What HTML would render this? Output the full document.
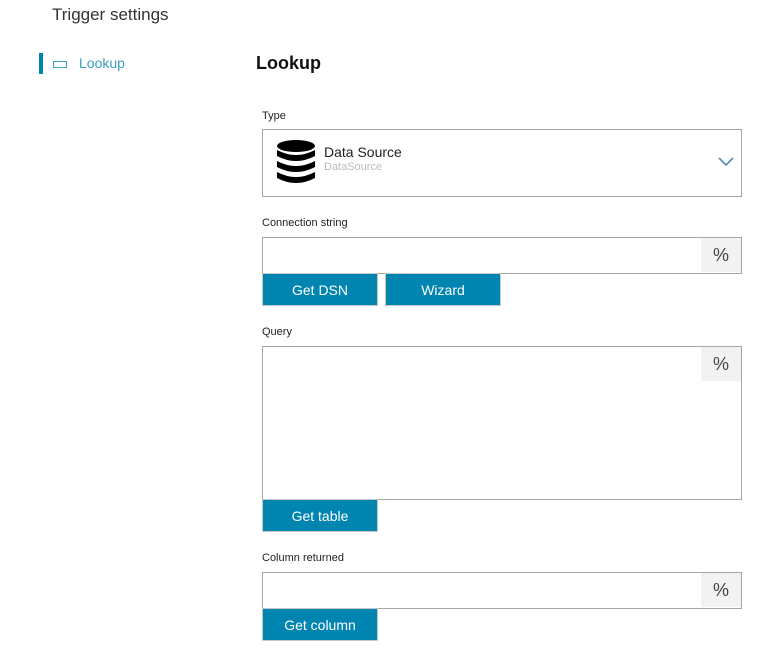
<!DOCTYPE html>
<html><head><style>
body{margin:0;width:768px;height:662px;background:#fff;font-family:"Liberation Sans",sans-serif;position:relative;overflow:hidden}
.a{position:absolute}
.lbl{font-size:11px;color:#222}
.box{border:1px solid #a6a6a6;box-sizing:border-box;background:#fff}
.pct{position:absolute;right:0;top:0;width:40px;height:34px;background:#f2f2f2;color:#444;font-size:18px;text-align:center;line-height:34px}
.btn{background:#0085b0;color:#fff;font-size:14px;text-align:center;line-height:32px;box-sizing:border-box;border:1px solid #c8c8c8}
</style></head><body>
<div class="a" style="left:52px;top:5px;font-size:17px;color:#333">Trigger settings</div>
<div class="a" style="left:39px;top:53px;width:4px;height:21px;background:#0085b0"></div>
<div class="a" style="left:53px;top:61px;width:12px;height:5px;border:1px solid #3a9ec2"></div>
<div class="a" style="left:79px;top:55px;font-size:14px;color:#3a9ec2">Lookup</div>
<div class="a" style="left:256px;top:53px;font-size:18px;font-weight:bold;color:#111">Lookup</div>
<div class="a lbl" style="left:262px;top:110px">Type</div>
<div class="a box" style="left:262px;top:129px;width:480px;height:68px">
<svg class="a" style="left:13px;top:10px" width="40" height="46" viewBox="0 0 40 46"><ellipse cx="20" cy="6" rx="19" ry="6"/><path d="M1 10q19 10 38 0v6q-19 10-38 0z"/><path d="M1 21q19 10 38 0v6q-19 10-38 0z"/><path d="M1 32q19 10 38 0v6q-19 10-38 0z"/></svg>
<div class="a" style="left:61px;top:14px;font-size:14px;color:#222">Data Source</div>
<div class="a" style="left:61px;top:31px;font-size:11px;color:#bbb">DataSource</div>
<svg class="a" style="left:455px;top:27px" width="16" height="10"><path d="M1 1l7 7 7-7" fill="none" stroke="#3a7fa8" stroke-width="1.5"/></svg>
</div>
<div class="a lbl" style="left:262px;top:217px">Connection string</div>
<div class="a box" style="left:262px;top:237px;width:480px;height:37px"><div class="pct">%</div></div>
<div class="a btn" style="left:262px;top:273px;width:116px;height:33px">Get DSN</div>
<div class="a btn" style="left:385px;top:273px;width:116px;height:33px">Wizard</div>
<div class="a lbl" style="left:262px;top:326px">Query</div>
<div class="a box" style="left:262px;top:346px;width:480px;height:154px"><div class="pct">%</div></div>
<div class="a btn" style="left:262px;top:499px;width:116px;height:33px">Get table</div>
<div class="a lbl" style="left:262px;top:552px">Column returned</div>
<div class="a box" style="left:262px;top:572px;width:480px;height:37px"><div class="pct">%</div></div>
<div class="a btn" style="left:262px;top:608px;width:116px;height:33px">Get column</div>
</body></html>
